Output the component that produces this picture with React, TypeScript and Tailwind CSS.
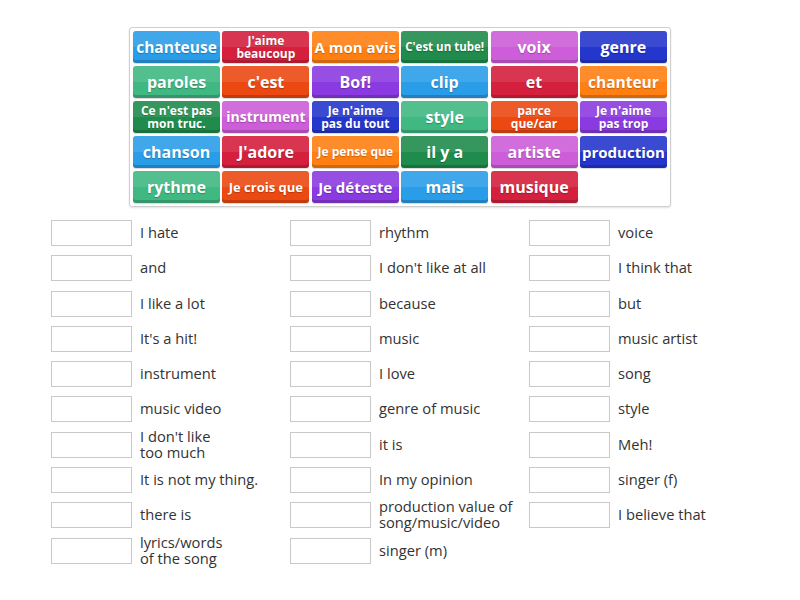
import React from 'react';

const colors: Record<string, string> = {
  blue: 'bg-[#2a9de8]',
  red: 'bg-[#d4203d]',
  orange: 'bg-[#ff7f12]',
  dkgreen: 'bg-[#1f8b4c]',
  pink: 'bg-[#cd5dd8]',
  dkblue: 'bg-[#2436cc]',
  ltgreen: 'bg-[#40b882]',
  redorange: 'bg-[#ec4912]',
  purple: 'bg-[#8a3ae0]',
};

type Tile = { text: string[]; color: string; size: string };

const tiles: Tile[] = [
  { text: ['chanteuse'], color: 'blue', size: 'text-[15.5px]' },
  { text: ["J'aime", 'beaucoup'], color: 'red', size: 'text-[12px]' },
  { text: ['A mon avis'], color: 'orange', size: 'text-[15px]' },
  { text: ["C'est un tube!"], color: 'dkgreen', size: 'text-[11.5px]' },
  { text: ['voix'], color: 'pink', size: 'text-[16px]' },
  { text: ['genre'], color: 'dkblue', size: 'text-[16px]' },

  { text: ['paroles'], color: 'ltgreen', size: 'text-[16px]' },
  { text: ["c'est"], color: 'redorange', size: 'text-[16px]' },
  { text: ['Bof!'], color: 'purple', size: 'text-[16px]' },
  { text: ['clip'], color: 'blue', size: 'text-[16px]' },
  { text: ['et'], color: 'red', size: 'text-[16px]' },
  { text: ['chanteur'], color: 'orange', size: 'text-[15.5px]' },

  { text: ["Ce n'est pas", 'mon truc.'], color: 'dkgreen', size: 'text-[12px]' },
  { text: ['instrument'], color: 'pink', size: 'text-[14px]' },
  { text: ["Je n'aime", 'pas du tout'], color: 'dkblue', size: 'text-[12px]' },
  { text: ['style'], color: 'ltgreen', size: 'text-[16px]' },
  { text: ['parce', 'que/car'], color: 'redorange', size: 'text-[12px]' },
  { text: ["Je n'aime", 'pas trop'], color: 'purple', size: 'text-[12px]' },

  { text: ['chanson'], color: 'blue', size: 'text-[16px]' },
  { text: ["J'adore"], color: 'red', size: 'text-[16px]' },
  { text: ['Je pense que'], color: 'orange', size: 'text-[12px]' },
  { text: ['il y a'], color: 'dkgreen', size: 'text-[16px]' },
  { text: ['artiste'], color: 'pink', size: 'text-[16px]' },
  { text: ['production'], color: 'dkblue', size: 'text-[15px]' },

  { text: ['rythme'], color: 'ltgreen', size: 'text-[16px]' },
  { text: ['Je crois que'], color: 'redorange', size: 'text-[13px]' },
  { text: ['Je déteste'], color: 'purple', size: 'text-[15px]' },
  { text: ['mais'], color: 'blue', size: 'text-[16px]' },
  { text: ['musique'], color: 'red', size: 'text-[16px]' },
];

const columns: string[][][] = [
  [
    ['I hate'],
    ['and'],
    ['I like a lot'],
    ["It's a hit!"],
    ['instrument'],
    ['music video'],
    ["I don't like", 'too much'],
    ['It is not my thing.'],
    ['there is'],
    ['lyrics/words', 'of the song'],
  ],
  [
    ['rhythm'],
    ["I don't like at all"],
    ['because'],
    ['music'],
    ['I love'],
    ['genre of music'],
    ['it is'],
    ['In my opinion'],
    ['production value of', 'song/music/video'],
    ['singer (m)'],
  ],
  [
    ['voice'],
    ['I think that'],
    ['but'],
    ['music artist'],
    ['song'],
    ['style'],
    ['Meh!'],
    ['singer (f)'],
    ['I believe that'],
  ],
];

function WordTile({ tile }: { tile: Tile }) {
  return (
    <div
      className={`${colors[tile.color]} relative h-[32px] rounded-[3px] flex items-center justify-center text-center text-white font-bold shadow-[inset_0_-3px_0_rgba(0,0,0,0.18),0_1px_1px_rgba(0,0,0,0.15)] overflow-hidden whitespace-nowrap`}
    >
      <div className="absolute inset-x-0 top-0 h-1/2 bg-white/10"></div>
      <span
        className={`${tile.size} relative ${tile.text.length === 1 ? 'leading-[20px]' : 'leading-[13px]'} [text-shadow:0_1px_1px_rgba(0,0,0,0.25)]`}
      >
        {tile.text[0]}
        {tile.text.length > 1 && (
          <>
            <br />
            {tile.text[1]}
          </>
        )}
      </span>
    </div>
  );
}

export default function App() {
  return (
    <div className="w-[800px] h-[600px] bg-white font-['Open_Sans',sans-serif] pt-[27px]">
      <div className="ml-[129px] w-[542px] border border-[#cfcfcf] rounded-[3px] p-[3px] shadow-[0_1px_2px_rgba(0,0,0,0.12)]">
        <div className="grid grid-cols-[repeat(6,87px)] gap-x-[2.4px] gap-y-[3px]">
          {tiles.map((t, i) => (
            <WordTile key={i} tile={t} />
          ))}
        </div>
      </div>

      <div className="flex pl-[51px] mt-[13px]">
        {columns.map((col, ci) => (
          <div key={ci} className="w-[239px] flex flex-col gap-[9.3px]">
            {col.map((lines, ri) => (
              <div key={ri} className="flex items-center h-[26px]">
                <div className="w-[81px] h-[26px] border border-[#c9c9c9] bg-white shrink-0"></div>
                <p className="pl-[8px] -mt-[2px] text-[14.7px] leading-[16px] text-[#333] whitespace-nowrap">
                  {lines[0]}
                  {lines.length > 1 && (
                    <>
                      <br />
                      {lines[1]}
                    </>
                  )}
                </p>
              </div>
            ))}
          </div>
        ))}
      </div>
    </div>
  );
}
